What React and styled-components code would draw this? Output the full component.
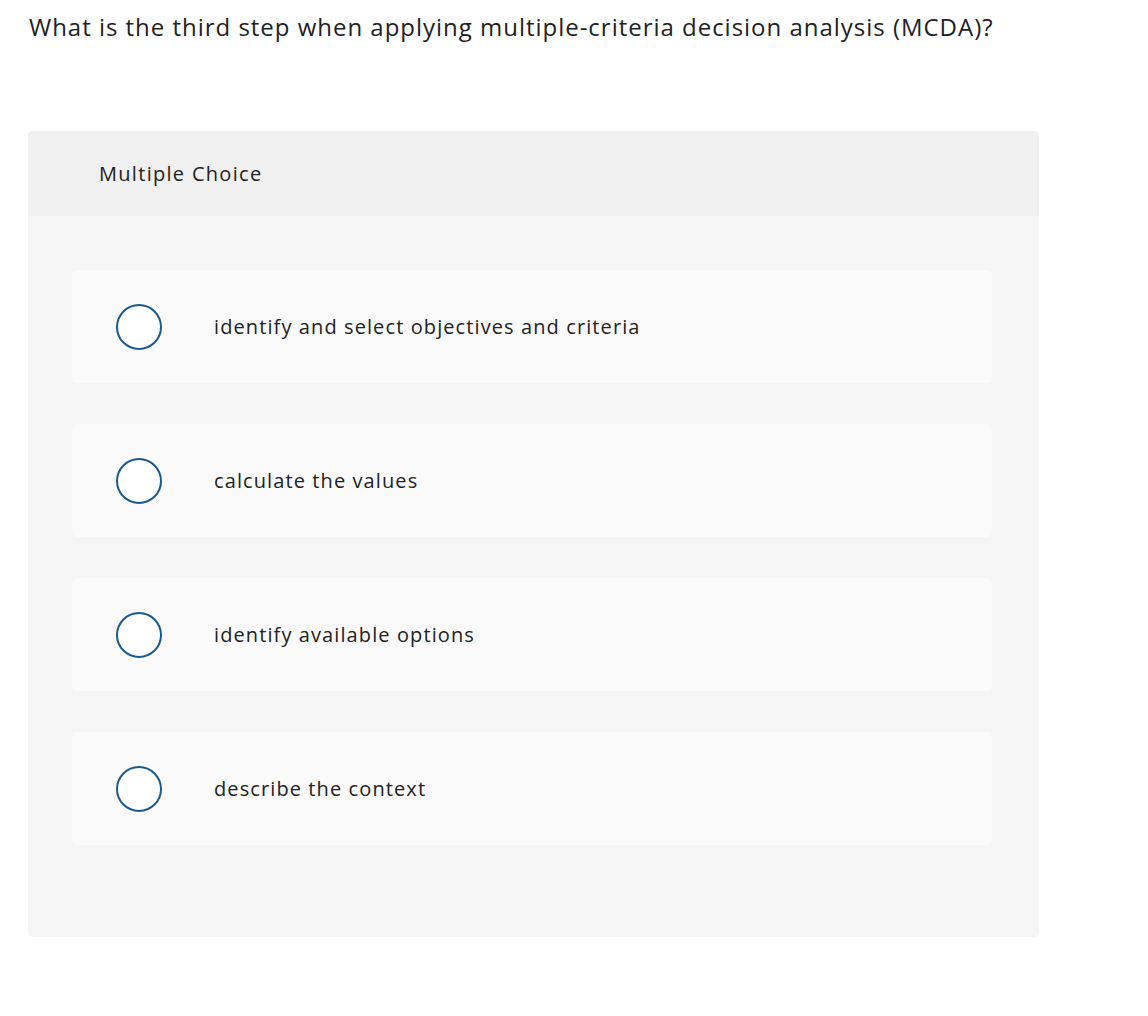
import React from "react";
import styled, { createGlobalStyle } from "styled-components";

const Global = createGlobalStyle`
  html, body { margin: 0; padding: 0; background: #fff; }
  body { font-family: "Open Sans", Lato, sans-serif; color: #222; }
`;

const Page = styled.div`
  padding: 10px 0 0 28px;
  width: 1011px;
`;

const Question = styled.h1`
  margin: 0;
  font-size: 24px;
  font-weight: 400;
  line-height: 34px;
  letter-spacing: 0.98px;
  color: #222;
  padding-left: 1px;
  white-space: nowrap;
`;

const Card = styled.section`
  margin-top: 87px;
  border-radius: 5px;
  overflow: hidden;
  background: #f5f5f5;
`;

const CardHeader = styled.div`
  height: 85px;
  background: #f0f0f0;
  display: flex;
  align-items: center;
  padding-left: 71px;
  font-size: 20px;
  letter-spacing: 1.3px;
  color: #222;
`;

const Options = styled.div`
  display: flex;
  flex-direction: column;
  gap: 41px;
  padding: 54px 47px 92px 44px;
`;

const Option = styled.label`
  height: 113px;
  background: #fafafa;
  border-radius: 5px;
  display: flex;
  align-items: center;
  padding-left: 44px;
  cursor: pointer;
`;

const Radio = styled.span`
  width: 42px;
  height: 42px;
  border: 2px solid #1b5a8e;
  border-radius: 50%;
  background: #fff;
  flex: none;
`;

const OptionText = styled.span`
  margin-left: 52px;
  font-size: 20px;
  letter-spacing: 1.1px;
  color: #222;
`;

const choices = [
  "identify and select objectives and criteria",
  "calculate the values",
  "identify available options",
  "describe the context",
];

export default function App() {
  return (
    <>
      <Global />
      <Page>
        <Question>What is the third step when applying multiple-criteria decision analysis (MCDA)?</Question>
        <Card>
          <CardHeader>Multiple Choice</CardHeader>
          <Options>
            {choices.map((c) => (
              <Option key={c}>
                <Radio />
                <OptionText>{c}</OptionText>
              </Option>
            ))}
          </Options>
        </Card>
      </Page>
    </>
  );
}
